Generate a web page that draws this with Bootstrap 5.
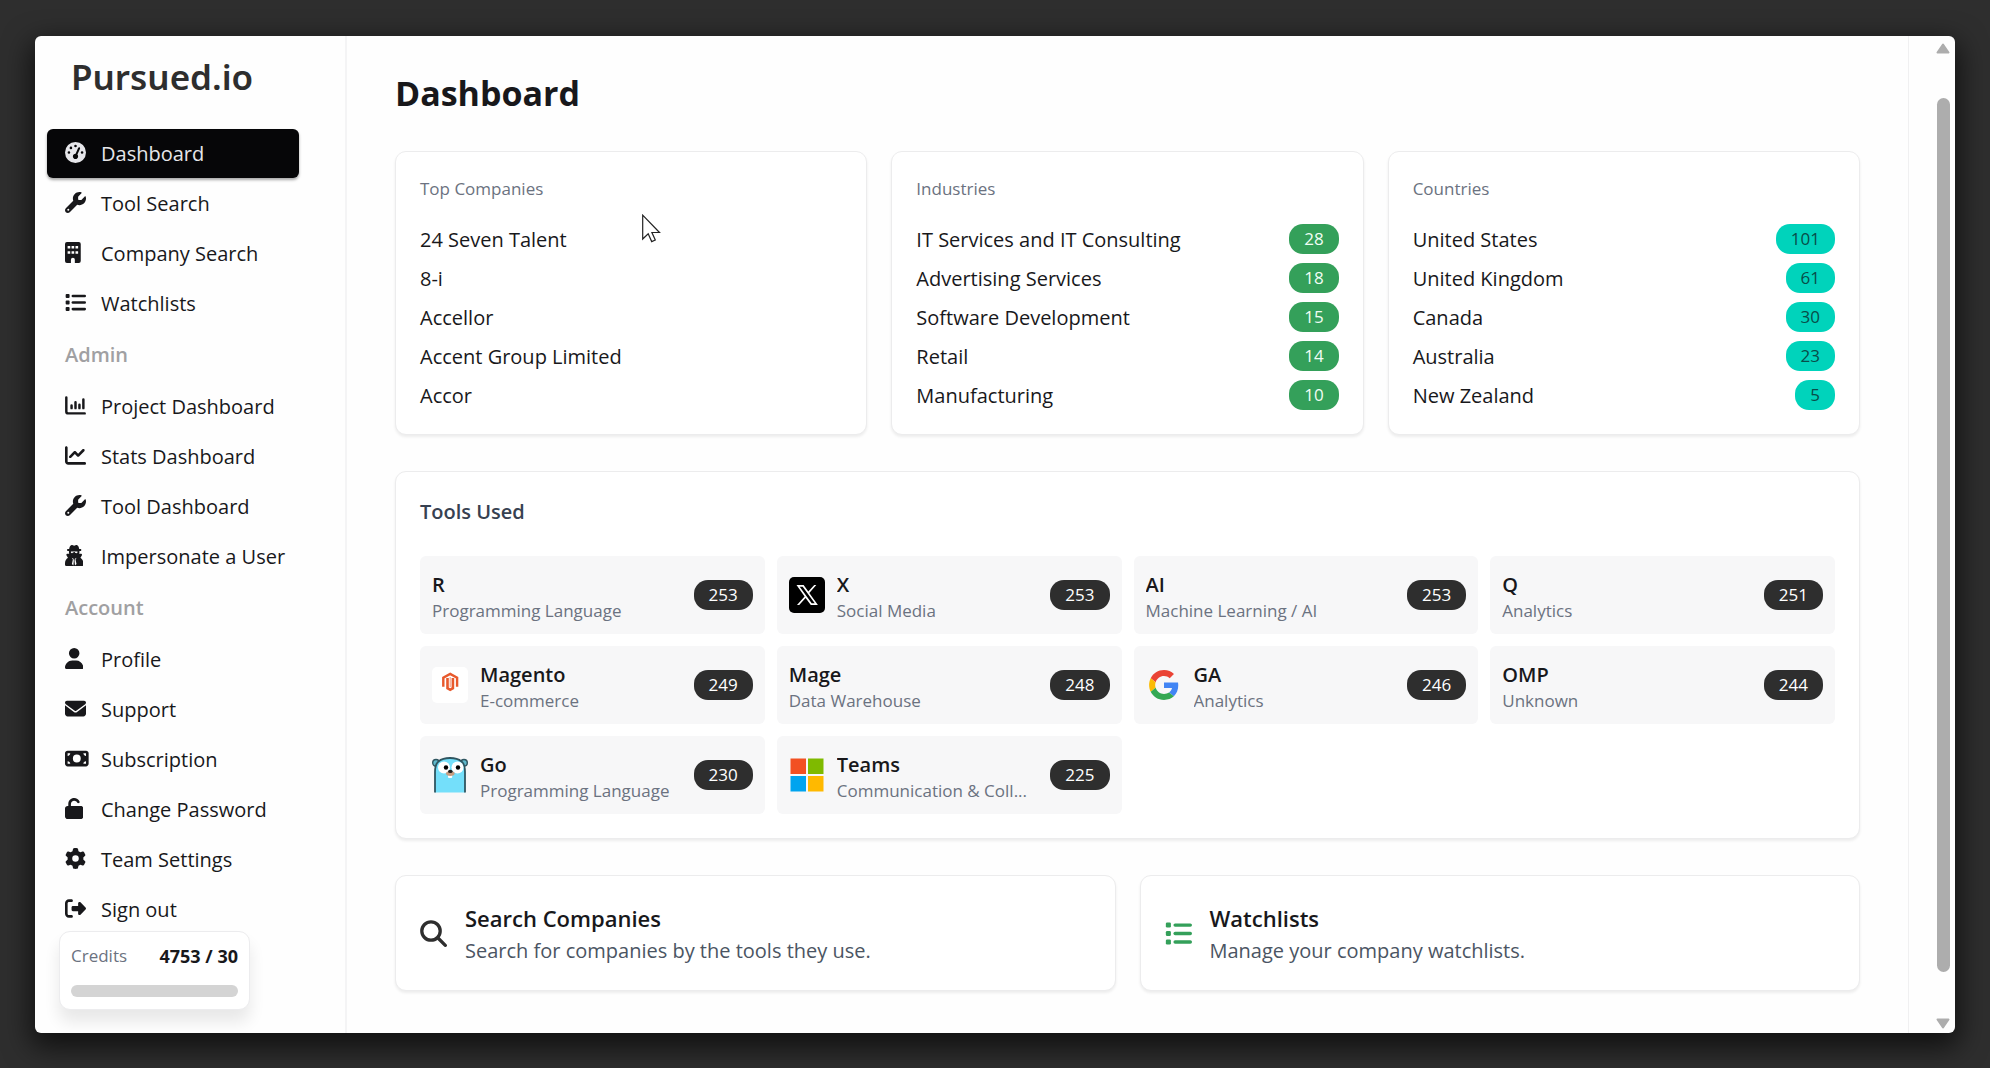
<!DOCTYPE html>
<html lang="en">
<head>
<meta charset="utf-8">
<meta name="viewport" content="width=device-width, initial-scale=1">
<title>Pursued.io – Dashboard</title>
<link href="https://cdn.jsdelivr.net/npm/bootstrap@5.3.0/dist/css/bootstrap.min.css" rel="stylesheet">
<style>
body{font-family:"Open Sans","Noto Sans",sans-serif;font-size:20px;line-height:32px;color:#18181b;background:#2e2e2e}
.stage{height:100vh;padding:36px 35px 35px 35px}
.app-window{background:#fefefe;border-radius:6px;box-shadow:0 10px 28px 4px rgba(0,0,0,.65);overflow:hidden}
.sidebar{width:312px;border-right:2px solid #f4f4f5;padding:0 0 0 12px}
.brand{font-family:"Noto Sans",sans-serif;font-size:35px;line-height:48px;font-weight:600;color:#2e2e2e;padding:17px 0 28px 24px;text-decoration:none}
.side-nav{gap:1px;width:252px}
.side-nav .nav-link{height:49px;padding:0 0 0 18px;color:#18181b;border-radius:6px;line-height:32px}
.side-nav .nav-link.active{background:#060608;color:#e6e6ea;box-shadow:0 2px 3px rgba(0,0,0,.35)}
.side-nav svg{height:21px;fill:currentColor;display:block}
.ico{width:36px;padding-bottom:3px}
.side-head{height:52px;padding-left:18px;color:#a0a0a2;font-weight:600}
.credits{left:24px;bottom:23px;width:191px;height:79px;padding:11px;border:1px solid #ececee;border-radius:11px;background:#fff;box-shadow:0 12px 16px rgba(0,0,0,.09);font-size:18px;line-height:26px}
.credits .label-text{color:#6b7280;font-size:17px;font-weight:500}
.credits .progress{height:12px;border-radius:6px;background:#d4d4d4;margin-top:16px}
.main-area{padding:35px 48px 0 48px;border-right:1px solid #f0f0f1}
h1{font-size:34px;line-height:44px;font-weight:700;margin:0 0 36px;color:#18181b}
.panel{border:1px solid #ececed;border-radius:11px;background:#fff;box-shadow:0 2px 3px rgba(0,0,0,.07);padding:24px}
.panel-cap{font-size:17px;line-height:26px;font-weight:400;color:#6b7280;margin:0 0 22px}
.gap-24{gap:24px}
.stack{gap:36px}
.rows{gap:7px;margin:0 0 -2px}
.pill{font-size:17px;line-height:29px;height:30px;border-radius:14px;padding:0 15px;flex:none}
.pill-green{background:#34a05a;color:#f0fdf4}
.pill-teal{background:#00d3bb;color:#084d49}
.pill-dark{background:#2e2e2e;color:#fff}
.tools-cap{font-size:20px;line-height:32px;font-weight:600;color:#374151;margin:0 0 28px}
.tools{display:grid;grid-template-columns:repeat(4,minmax(0,1fr));gap:12px}
.tool{background:#f7f7f8;border-radius:6px;height:78px;padding:12px;gap:12px}
.tool-text{padding-top:5px}
.tool-name{font-weight:600;line-height:26px}
.tool-kind{font-size:17px;line-height:26px;color:#6b7280}
.tool svg{width:36px;height:36px;flex:none}
.action{height:116px;color:#18181b;text-decoration:none}
.action svg{width:27px;height:27px}
.action-ico{width:45px}
.action-label{padding-top:4px}
.action-name{font-size:22px;line-height:32px;font-weight:600}
.action-text{font-size:20px;line-height:34px;color:#4b5563}
.scroller{width:46px;padding:7px 5px 4px 0}
.thumb{width:13px;border-radius:7px;background:#adadad;margin:44px 0 46px}
.pointer{left:642px;top:214px;z-index:5}
</style>
</head>
<body>
<svg width="0" height="0" class="position-absolute" aria-hidden="true">
<symbol id="wrench" viewBox="0 0 512 512"><path d="M352 320c88.400 0 160-71.600 160-160c0-15.300-2.200-30.100-6.200-44.200c-3.100-10.800-16.400-13.200-24.300-5.300l-76.800 76.800c-3 3-7.100 4.700-11.300 4.700L336 192c-8.800 0-16-7.200-16-16l0-57.400c0-4.200 1.700-8.300 4.700-11.300l76.800-76.800c7.900-7.900 5.400-21.200-5.300-24.300C382.100 2.200 367.300 0 352 0C263.600 0 192 71.600 192 160c0 19.100 3.400 37.500 9.500 54.500L19.900 396.100C7.200 408.800 0 426.100 0 444.100C0 481.600 30.400 512 67.900 512c18 0 35.300-7.200 48-19.900L297.500 310.500c17 6.200 35.400 9.500 54.500 9.500zM80 408a24 24 0 1 1 0 48 24 24 0 1 1 0-48z"/></symbol>
<symbol id="list" viewBox="0 0 512 512"><rect x="16" y="48" width="96" height="96" rx="24"/><rect x="16" y="208" width="96" height="96" rx="24"/><rect x="16" y="368" width="96" height="96" rx="24"/><rect x="160" y="64" width="352" height="64" rx="32"/><rect x="160" y="224" width="352" height="64" rx="32"/><rect x="160" y="384" width="352" height="64" rx="32"/></symbol>
</svg>
<div class="stage">
<div class="app-window d-flex h-100">
<aside class="sidebar flex-shrink-0 position-relative">
  <a class="brand d-block" href="#">Pursued.io</a>
  <nav class="side-nav nav flex-column flex-nowrap">
    <a class="nav-link active d-flex align-items-center" href="#"><span class="ico"><svg viewBox="0 0 512 512"><path d="M0 256a256 256 0 1 1 512 0A256 256 0 1 1 0 256zM288 96a32 32 0 1 0 -64 0 32 32 0 1 0 64 0zM256 416c35.300 0 64-28.700 64-64c0-17.400-6.900-33.100-18.100-44.600L366 161.700c5.300-12.100-.2-26.300-12.300-31.600s-26.300 .2-31.600 12.300L257.900 288c-.6 0-1.300 0-1.900 0c-35.300 0-64 28.700-64 64s28.700 64 64 64zM176 144a32 32 0 1 0 -64 0 32 32 0 1 0 64 0zM96 288a32 32 0 1 0 0-64 32 32 0 1 0 0 64zm352-32a32 32 0 1 0 -64 0 32 32 0 1 0 64 0z"/></svg></span>Dashboard</a>
    <a class="nav-link d-flex align-items-center" href="#"><span class="ico"><svg viewBox="0 0 512 512"><use href="#wrench"/></svg></span>Tool Search</a>
    <a class="nav-link d-flex align-items-center" href="#"><span class="ico"><svg viewBox="0 0 384 512"><path fill-rule="evenodd" d="M48 0H336a48 48 0 0 1 48 48V464a48 48 0 0 1-48 48H240V432a48 48 0 0 0-96 0V512H48A48 48 0 0 1 0 464V48A48 48 0 0 1 48 0ZM64 96v64h64V96ZM160 96v64h64V96ZM256 96v64h64V96ZM64 224v64h64v-64ZM160 224v64h64v-64ZM256 224v64h64v-64Z"/></svg></span>Company Search</a>
    <a class="nav-link d-flex align-items-center" href="#"><span class="ico"><svg viewBox="0 0 512 512"><use href="#list"/></svg></span>Watchlists</a>
    <div class="side-head d-flex align-items-center">Admin</div>
    <a class="nav-link d-flex align-items-center" href="#"><span class="ico"><svg viewBox="0 0 512 512"><g fill="none" stroke="currentColor" stroke-width="60" stroke-linecap="round" stroke-linejoin="round"><path d="M32 62V400a48 48 0 0 0 48 48H480M160 256V320M256 176V320M352 240V320M448 112V320"/></g></svg></span>Project Dashboard</a>
    <a class="nav-link d-flex align-items-center" href="#"><span class="ico"><svg viewBox="0 0 512 512"><path d="M64 64c0-17.700-14.300-32-32-32S0 46.300 0 64L0 400c0 44.200 35.800 80 80 80l400 0c17.700 0 32-14.300 32-32s-14.300-32-32-32L80 416c-8.800 0-16-7.200-16-16L64 64zm406.600 86.600c12.500-12.500 12.500-32.800 0-45.300s-32.800-12.500-45.300 0L320 210.700l-57.400-57.400c-12.500-12.500-32.800-12.500-45.300 0l-112 112c-12.500 12.500-12.500 32.800 0 45.300s32.800 12.500 45.300 0L240 221.300l57.400 57.400c12.500 12.500 32.800 12.500 45.300 0l128-128z"/></svg></span>Stats Dashboard</a>
    <a class="nav-link d-flex align-items-center" href="#"><span class="ico"><svg viewBox="0 0 512 512"><use href="#wrench"/></svg></span>Tool Dashboard</a>
    <a class="nav-link d-flex align-items-center" href="#"><span class="ico"><svg viewBox="0 0 448 512"><path fill-rule="evenodd" d="M224 16C245 16 265 0 288 0C318 0 338 55 347 96H376C405 96 405 144 376 144H352V176C352 190 350 204 345 216H384C410 216 422 236 410 254L376 312C418 340 448 388 448 446V480A32 32 0 0 1 416 512H32A32 32 0 0 1 0 480V446C0 388 30 340 72 312L38 254C26 236 38 216 64 216H103C98 204 96 190 96 176V144H72C43 144 43 96 72 96H101C110 55 130 0 160 0C183 0 203 16 224 16ZM144 160V184C150 208 200 208 210 172H238C248 208 298 208 304 184V160ZM164 310L192 352L168 464L204 500L216 384L208 336ZM284 310L256 352L280 464L244 500L232 384L240 336Z"/></svg></span>Impersonate a User</a>
    <div class="side-head d-flex align-items-center">Account</div>
    <a class="nav-link d-flex align-items-center" href="#"><span class="ico"><svg viewBox="0 0 448 512"><path d="M224 256A128 128 0 1 0 224 0a128 128 0 1 0 0 256zm-45.700 48C79.800 304 0 383.800 0 482.300C0 498.700 13.300 512 29.700 512l388.600 0c16.400 0 29.700-13.300 29.700-29.700C448 383.800 368.200 304 269.700 304l-91.400 0z"/></svg></span>Profile</a>
    <a class="nav-link d-flex align-items-center" href="#"><span class="ico"><svg viewBox="0 0 512 512"><path d="M48 64C21.500 64 0 85.500 0 112c0 15.100 7.100 29.300 19.200 38.400L236.800 313.600c11.400 8.500 27 8.500 38.400 0L492.800 150.400c12.100-9.100 19.200-23.300 19.200-38.400c0-26.500-21.500-48-48-48L48 64zM0 176L0 384c0 35.300 28.700 64 64 64l384 0c35.300 0 64-28.700 64-64l0-208L294.400 339.200c-22.800 17.100-54 17.100-76.800 0L0 176z"/></svg></span>Support</a>
    <a class="nav-link d-flex align-items-center" href="#"><span class="ico"><svg viewBox="0 0 576 512"><path d="M64 64C28.700 64 0 92.700 0 128L0 384c0 35.300 28.700 64 64 64l448 0c35.300 0 64-28.700 64-64l0-256c0-35.300-28.700-64-64-64L64 64zm64 320l-64 0 0-64c35.300 0 64 28.700 64 64zM64 192l0-64 64 0c0 35.300-28.700 64-64 64zM448 384c0-35.300 28.700-64 64-64l0 64-64 0zm64-192c-35.300 0-64-28.700-64-64l64 0 0 64zM288 160a96 96 0 1 1 0 192 96 96 0 1 1 0-192z"/></svg></span>Subscription</a>
    <a class="nav-link d-flex align-items-center" href="#"><span class="ico"><svg viewBox="0 0 448 512"><path d="M144 144c0-44.200 35.800-80 80-80c31.900 0 59.400 18.600 72.300 45.700c7.600 16 26.700 22.800 42.600 15.200s22.800-26.700 15.200-42.600C331 33.700 281.500 0 224 0C144.500 0 80 64.500 80 144l0 48-16 0c-35.300 0-64 28.700-64 64L0 448c0 35.300 28.700 64 64 64l320 0c35.300 0 64-28.700 64-64l0-192c0-35.300-28.700-64-64-64l-240 0 0-48z"/></svg></span>Change Password</a>
    <a class="nav-link d-flex align-items-center" href="#"><span class="ico"><svg viewBox="0 0 512 512"><path d="M495.900 166.600c3.200 8.700 .5 18.400-6.400 24.600l-43.300 39.400c1.100 8.300 1.700 16.800 1.700 25.400s-.6 17.100-1.700 25.400l43.300 39.400c6.900 6.200 9.600 15.900 6.400 24.600c-4.400 11.900-9.700 23.300-15.800 34.300l-4.700 8.100c-6.600 11-14 21.400-22.100 31.200c-5.900 7.200-15.700 9.600-24.500 6.800l-55.700-17.700c-13.400 10.300-28.200 18.900-44 25.400l-12.500 57.100c-2 9.100-9 16.300-18.200 17.800c-13.800 2.300-28 3.500-42.500 3.500s-28.700-1.200-42.500-3.500c-9.200-1.500-16.200-8.700-18.200-17.800l-12.500-57.100c-15.800-6.500-30.600-15.100-44-25.400L83.100 425.900c-8.800 2.800-18.600 .3-24.500-6.800c-8.100-9.800-15.500-20.200-22.100-31.200l-4.700-8.100c-6.100-11-11.400-22.400-15.800-34.300c-3.200-8.700-.5-18.400 6.400-24.600l43.300-39.400C64.600 273.100 64 264.600 64 256s.6-17.100 1.700-25.400L22.400 191.200c-6.900-6.200-9.600-15.900-6.400-24.600c4.400-11.900 9.700-23.300 15.800-34.300l4.700-8.100c6.600-11 14-21.400 22.100-31.200c5.900-7.200 15.700-9.600 24.500-6.800l55.700 17.700c13.400-10.300 28.200-18.900 44-25.400l12.500-57.100c2-9.100 9-16.300 18.200-17.800C227.300 1.200 241.500 0 256 0s28.700 1.200 42.500 3.500c9.200 1.500 16.200 8.700 18.200 17.800l12.500 57.100c15.800 6.500 30.600 15.100 44 25.400l55.700-17.700c8.800-2.800 18.600-.3 24.500 6.800c8.100 9.800 15.500 20.200 22.100 31.200l4.700 8.100c6.100 11 11.400 22.400 15.800 34.300zM256 336a80 80 0 1 0 0-160 80 80 0 1 0 0 160z"/></svg></span>Team Settings</a>
    <a class="nav-link d-flex align-items-center" href="#"><span class="ico"><svg viewBox="0 0 512 512"><path d="M377.900 105.900L500.700 228.700c7.200 7.200 11.300 17.100 11.300 27.300s-4.100 20.100-11.300 27.300L377.900 406.100c-6.400 6.400-15 9.900-24 9.900c-18.700 0-33.900-15.200-33.900-33.900l0-62.100-128 0c-17.700 0-32-14.300-32-32l0-64c0-17.700 14.300-32 32-32l128 0 0-62.100c0-18.700 15.200-33.900 33.900-33.900c9 0 17.600 3.600 24 9.900zM160 96L96 96c-17.700 0-32 14.300-32 32l0 256c0 17.700 14.300 32 32 32l64 0c17.700 0 32 14.300 32 32s-14.300 32-32 32l-64 0c-53 0-96-43-96-96L0 128C0 75 43 32 96 32l64 0c17.700 0 32 14.300 32 32s-14.300 32-32 32z"/></svg></span>Sign out</a>
  </nav>
  <div class="credits position-absolute">
    <div class="d-flex justify-content-between"><span class="label-text">Credits</span><strong>4753 / 30</strong></div>
    <div class="progress" role="progressbar" aria-label="Credits used" aria-valuenow="0" aria-valuemin="0" aria-valuemax="100"></div>
  </div>
</aside>

<main class="main-area flex-grow-1 overflow-hidden">
  <h1>Dashboard</h1>
  <div class="stack d-flex flex-column">
  <div class="d-flex gap-24">
    <section class="panel w-100">
      <h2 class="panel-cap">Top Companies</h2>
      <ul class="rows list-unstyled d-flex flex-column">
        <li>24 Seven Talent</li><li>8-i</li><li>Accellor</li><li>Accent Group Limited</li><li>Accor</li>
      </ul>
    </section>
    <section class="panel w-100">
      <h2 class="panel-cap">Industries</h2>
      <ul class="rows list-unstyled d-flex flex-column">
        <li class="d-flex justify-content-between">IT Services and IT Consulting<span class="pill pill-green">28</span></li>
        <li class="d-flex justify-content-between">Advertising Services<span class="pill pill-green">18</span></li>
        <li class="d-flex justify-content-between">Software Development<span class="pill pill-green">15</span></li>
        <li class="d-flex justify-content-between">Retail<span class="pill pill-green">14</span></li>
        <li class="d-flex justify-content-between">Manufacturing<span class="pill pill-green">10</span></li>
      </ul>
    </section>
    <section class="panel w-100">
      <h2 class="panel-cap">Countries</h2>
      <ul class="rows list-unstyled d-flex flex-column">
        <li class="d-flex justify-content-between">United States<span class="pill pill-teal">101</span></li>
        <li class="d-flex justify-content-between">United Kingdom<span class="pill pill-teal">61</span></li>
        <li class="d-flex justify-content-between">Canada<span class="pill pill-teal">30</span></li>
        <li class="d-flex justify-content-between">Australia<span class="pill pill-teal">23</span></li>
        <li class="d-flex justify-content-between">New Zealand<span class="pill pill-teal">5</span></li>
      </ul>
    </section>
  </div>

  <section class="panel">
    <h2 class="tools-cap">Tools Used</h2>
    <div class="tools">
      <div class="tool d-flex align-items-center"><div class="tool-text flex-grow-1 text-truncate"><div class="tool-name">R</div><div class="tool-kind text-truncate">Programming Language</div></div><span class="pill pill-dark">253</span></div>
      <div class="tool d-flex align-items-center"><svg viewBox="0 0 36 36"><rect width="36" height="36" rx="5"/><path fill="#fff" fill-rule="evenodd" d="M7.500 8H14.600L19.300 14.400L25.200 8H27.300L20.300 15.900L28.900 28H21.800L16.600 20.900L10.200 28H8L15.600 19.400ZM10.700 9.700L22.700 26.300H25.700L13.700 9.700Z"/></svg><div class="tool-text flex-grow-1 text-truncate"><div class="tool-name">X</div><div class="tool-kind text-truncate">Social Media</div></div><span class="pill pill-dark">253</span></div>
      <div class="tool d-flex align-items-center"><div class="tool-text flex-grow-1 text-truncate"><div class="tool-name">AI</div><div class="tool-kind text-truncate">Machine Learning / AI</div></div><span class="pill pill-dark">253</span></div>
      <div class="tool d-flex align-items-center"><div class="tool-text flex-grow-1 text-truncate"><div class="tool-name">Q</div><div class="tool-kind text-truncate">Analytics</div></div><span class="pill pill-dark">251</span></div>
      <div class="tool d-flex align-items-center"><svg viewBox="0 0 36 36"><rect width="36" height="36" rx="5" fill="#fff"/><g fill="none" stroke="#e8592c" stroke-width="2.400"><path d="M11.300 19.800V10.700L18.200 6.900L25.100 10.700V19.800"/><path d="M15.500 11V21.200L18.200 22.800L20.900 21.200V11" stroke-width="2.600"/><path d="M18.200 10V20" stroke="#f4a58c" stroke-width="1.200"/></g></svg><div class="tool-text flex-grow-1 text-truncate"><div class="tool-name">Magento</div><div class="tool-kind text-truncate">E-commerce</div></div><span class="pill pill-dark">249</span></div>
      <div class="tool d-flex align-items-center"><div class="tool-text flex-grow-1 text-truncate"><div class="tool-name">Mage</div><div class="tool-kind text-truncate">Data Warehouse</div></div><span class="pill pill-dark">248</span></div>
      <div class="tool d-flex align-items-center"><svg viewBox="-5 -5 58 58"><path fill="#ea4335" d="M24 9.500c3.540 0 6.710 1.220 9.210 3.600l6.850-6.850C35.900 2.380 30.470 0 24 0 14.620 0 6.510 5.380 2.560 13.220l7.980 6.190C12.430 13.720 17.740 9.500 24 9.500z"/><path fill="#4285f4" d="M46.980 24.550c0-1.570-.15-3.090-.38-4.550H24v9.020h12.940c-.58 2.960-2.260 5.480-4.780 7.180l7.730 6c4.510-4.180 7.090-10.360 7.090-17.650z"/><path fill="#fbbc05" d="M10.530 28.590c-.48-1.450-.76-2.990-.76-4.590s.27-3.140.76-4.590l-7.980-6.190C.92 16.460 0 20.120 0 24c0 3.880.92 7.540 2.560 10.780l7.970-6.190z"/><path fill="#34a853" d="M24 48c6.480 0 11.930-2.130 15.890-5.810l-7.730-6c-2.150 1.450-4.920 2.300-8.160 2.300-6.260 0-11.570-4.220-13.470-9.910l-7.980 6.190C6.510 42.620 14.620 48 24 48z"/></svg><div class="tool-text flex-grow-1 text-truncate"><div class="tool-name">GA</div><div class="tool-kind text-truncate">Analytics</div></div><span class="pill pill-dark">246</span></div>
      <div class="tool d-flex align-items-center"><div class="tool-text flex-grow-1 text-truncate"><div class="tool-name">OMP</div><div class="tool-kind text-truncate">Unknown</div></div><span class="pill pill-dark">244</span></div>
      <div class="tool d-flex align-items-center"><svg viewBox="0 0 36 36"><g stroke="#2f5560" stroke-width="1.400"><circle cx="4" cy="5.800" r="3.300" fill="#5fb9cc"/><circle cx="32" cy="5.800" r="3.300" fill="#5fb9cc"/></g><path d="M3 35.500V15C3 10 3.500 7 6.500 4.500C12-.2 24-.2 29.500 4.500C32.500 7 33 10 33 15V35.500" fill="#74dffa" stroke="#2f5560" stroke-width="1.800"/><circle cx="12" cy="10.500" r="6" fill="#fff"/><circle cx="25.500" cy="10.500" r="6" fill="#fff"/><circle cx="14" cy="10.500" r="2.200"/><circle cx="26" cy="10.500" r="2.200"/><rect x="16" y="17" width="4.200" height="4" rx="1" fill="#fff"/><ellipse cx="18.300" cy="16.600" rx="4.300" ry="2.300" fill="#c69c80"/><ellipse cx="18.300" cy="14.400" rx="2.300" ry="1.600" fill="#1c1c1c"/></svg><div class="tool-text flex-grow-1 text-truncate"><div class="tool-name">Go</div><div class="tool-kind text-truncate">Programming Language</div></div><span class="pill pill-dark">230</span></div>
      <div class="tool d-flex align-items-center"><svg viewBox="0 0 36 36"><path fill="#f25022" d="M1.500 1.500h15.500v15.500h-15.500z"/><path fill="#7fba00" d="M19 1.500h15.500v15.500h-15.500z"/><path fill="#00a4ef" d="M1.500 19h15.500v15.500h-15.500z"/><path fill="#ffb900" d="M19 19h15.500v15.500h-15.500z"/></svg><div class="tool-text flex-grow-1 text-truncate"><div class="tool-name">Teams</div><div class="tool-kind text-truncate">Communication &amp; Coll...</div></div><span class="pill pill-dark">225</span></div>
    </div>
  </section>

  <div class="d-flex gap-24">
    <a class="panel action w-100 d-flex align-items-center" href="#"><span class="action-ico"><svg class="d-block" viewBox="0 0 27 27" fill="none" stroke="#2e2e2e" stroke-width="3.300" stroke-linecap="round"><circle cx="11" cy="11" r="9.200"/><path d="M18 18L25.300 25.300"/></svg></span><span class="action-label"><span class="action-name d-block">Search Companies</span><span class="action-text d-block">Search for companies by the tools they use.</span></span></a>
    <a class="panel action w-100 d-flex align-items-center" href="#"><span class="action-ico"><svg class="d-block" viewBox="0 0 512 512" fill="#34a05a"><use href="#list"/></svg></span><span class="action-label"><span class="action-name d-block">Watchlists</span><span class="action-text d-block">Manage your company watchlists.</span></span></a>
  </div>
  </div>
</main>

<div class="scroller flex-shrink-0 d-flex flex-column align-items-end" aria-hidden="true">
  <svg width="14" height="11"><path d="M7 1.500L12.500 9.500H1.500Z" fill="#adadad" stroke="#adadad" stroke-width="2" stroke-linejoin="round"/></svg>
  <div class="thumb flex-grow-1"></div>
  <svg width="14" height="11"><path d="M7 9.500L12.500 1.500H1.500Z" fill="#adadad" stroke="#adadad" stroke-width="2" stroke-linejoin="round"/></svg>
</div>
</div>
</div>
<svg class="pointer position-absolute" width="19" height="30" viewBox="0 0 19 30" aria-hidden="true"><path d="M.7 1.200V25L6.200 19.800L9.700 27.600L13.300 26L9.900 18.500H17.500Z" fill="#fff" stroke="#222" stroke-width="1.200"/></svg>
<script src="https://cdn.jsdelivr.net/npm/bootstrap@5.3.0/dist/js/bootstrap.bundle.min.js"></script>
</body>
</html>
